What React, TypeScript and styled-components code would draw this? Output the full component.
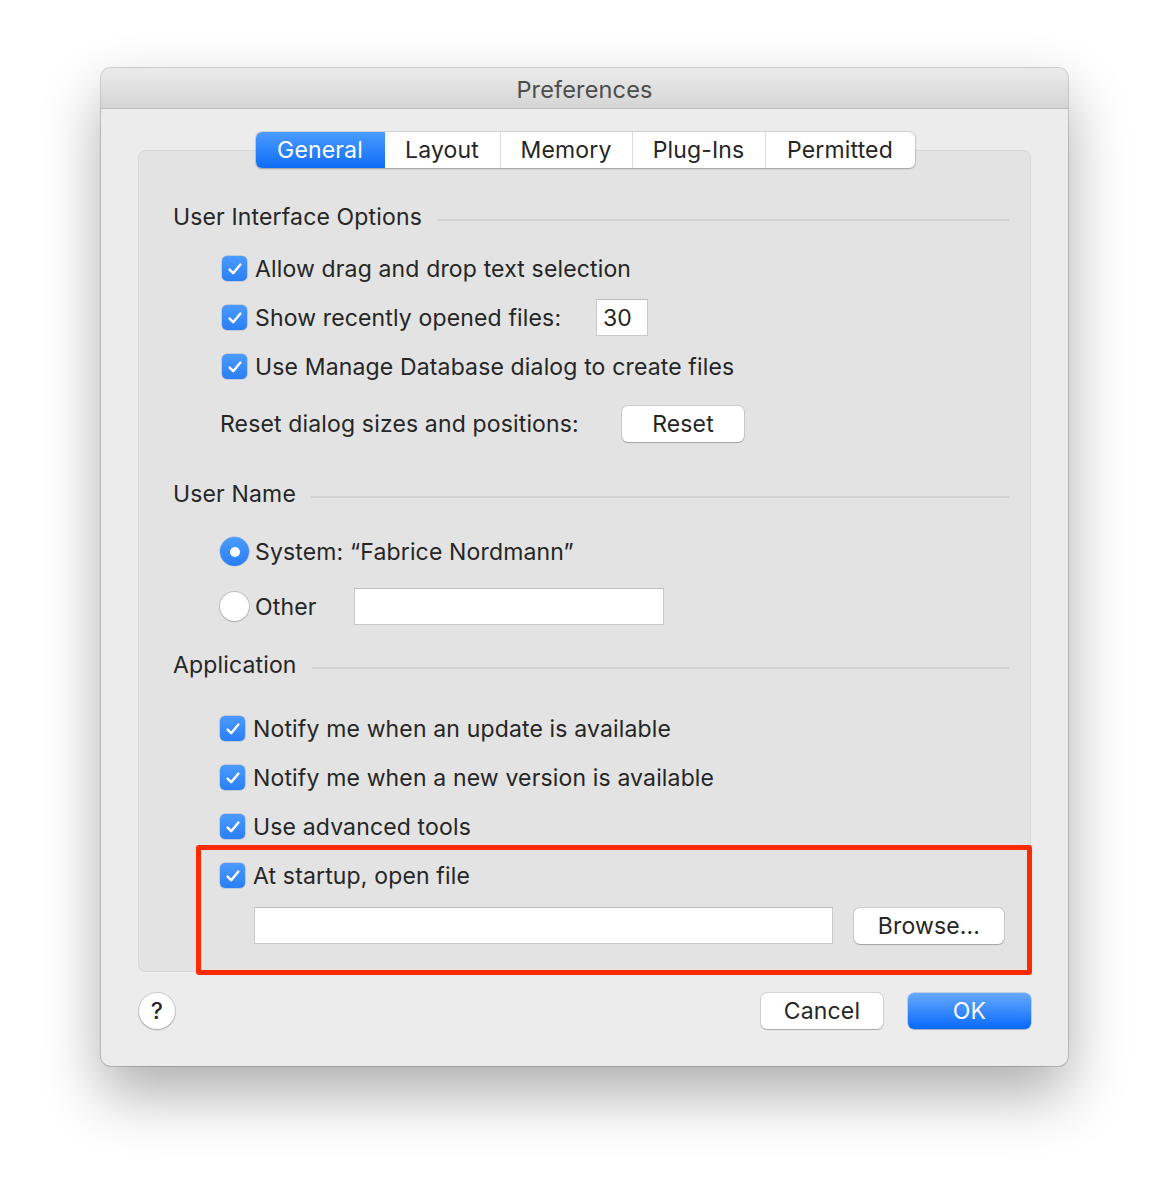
import React from "react";
import styled, { createGlobalStyle } from "styled-components";

const Global = createGlobalStyle`
  html, body { margin: 0; padding: 0; background: #ffffff; }
  body { font-family: Inter, "Noto Sans", "Liberation Sans", sans-serif; color: #262626; letter-spacing: 0.15px; }
  * { box-sizing: border-box; }
`;

const Page = styled.div`
  width: 1170px;
  height: 1201px;
  padding: 68px 0 0 101px;
`;

const Window = styled.div`
  width: 967px;
  height: 998px;
  border-radius: 10px;
  background: #ececec;
  box-shadow: 0 28px 60px rgba(0, 0, 0, 0.32), 0 0 0 1px rgba(0, 0, 0, 0.16);
  overflow: hidden;
  display: flex;
  flex-direction: column;
`;

const TitleBar = styled.div`
  height: 41px;
  flex: none;
  display: flex;
  align-items: center;
  justify-content: center;
  background: linear-gradient(#ebebeb, #d5d5d5);
  border-bottom: 1px solid #bdbdbd;
  font-size: 23.5px;
  color: #4d4d4d;
  padding-top: 2px;
`;

const Body = styled.div`
  flex: 1;
  padding: 23px 37px 0 37px;
  display: flex;
  flex-direction: column;
`;

const TabBar = styled.div`
  align-self: center;
  display: flex;
  height: 36px;
  border-radius: 6px;
  background: #fff;
  box-shadow: 0 0 0 1px rgba(0, 0, 0, 0.1), 0 1px 2px rgba(0, 0, 0, 0.22);
  position: relative;
  z-index: 2;
  margin-left: 1px;
`;

const Tab = styled.div<{ $w: number; $active?: boolean }>`
  width: ${(p) => p.$w}px;
  display: flex;
  align-items: center;
  justify-content: center;
  font-size: 23px;
  color: ${(p) => (p.$active ? "#fff" : "#262626")};
  background: ${(p) => (p.$active ? "linear-gradient(#4c9cff, #0f6cf6)" : "transparent")};
  border-left: ${(p) => (p.$active ? "none" : "1px solid #dcdcdc")};
  &:first-child { border-radius: 6px 0 0 6px; border-left: none; }
  &:last-child { border-radius: 0 6px 6px 0; }
  &:nth-child(2) { border-left: none; }
`;

const GroupBox = styled.div`
  margin-top: -18px;
  background: #e3e3e3;
  border: 1px solid rgba(0, 0, 0, 0.05);
  border-radius: 8px;
  padding: 52px 21px 27px 34px;
  display: flex;
  flex-direction: column;
  position: relative;
`;

const SectionHeader = styled.div<{ $mt?: number }>`
  height: 28px;
  margin-top: ${(p) => p.$mt ?? 0}px;
  display: flex;
  align-items: center;
  font-size: 23px;
  gap: 15px;
  &::after {
    content: "";
    flex: 1;
    height: 2px;
    background: #d2d2d2;
    margin-top: 6px;
  }
`;

const Items = styled.div<{ $mt: number; $indent: number }>`
  margin-top: ${(p) => p.$mt}px;
  padding-left: ${(p) => p.$indent}px;
  display: flex;
  flex-direction: column;
`;

const Row = styled.div<{ $h: number }>`
  height: ${(p) => p.$h}px;
  display: flex;
  align-items: center;
  font-size: 23px;
`;

const Box = styled.span`
  width: 25px;
  height: 25px;
  border-radius: 5px;
  background: linear-gradient(#4b9bff, #2a7ef2);
  display: inline-flex;
  align-items: center;
  justify-content: center;
  margin-right: 8px;
  flex: none;
  box-shadow: 0 0 0 0.5px rgba(0, 60, 160, 0.3);
`;

const Radio = styled.span<{ $on?: boolean }>`
  width: 29px;
  height: 29px;
  border-radius: 50%;
  flex: none;
  margin-right: 6px;
  display: inline-flex;
  align-items: center;
  justify-content: center;
  background: ${(p) => (p.$on ? "linear-gradient(#4b9bff, #2a7ef2)" : "#fff")};
  box-shadow: ${(p) =>
    p.$on ? "0 0 0 0.5px rgba(0,60,160,0.3)" : "0 0 0 1px rgba(0,0,0,0.15), 0 1px 1px rgba(0,0,0,0.12)"};
  &::after {
    content: "";
    display: ${(p) => (p.$on ? "block" : "none")};
    width: 10px;
    height: 10px;
    border-radius: 50%;
    background: #fff;
  }
`;

const Label = styled.span<{ $w?: number }>`
  width: ${(p) => (p.$w ? `${p.$w}px` : "auto")};
  flex: none;
  white-space: nowrap;
`;

const Field = styled.div<{ $w: number; $h?: number }>`
  width: ${(p) => p.$w}px;
  height: ${(p) => p.$h ?? 37}px;
  background: #fff;
  border: 1px solid #c9c9c9;
  border-top-color: #bdbdbd;
  display: flex;
  align-items: center;
  padding-left: 6px;
  font-size: 23px;
  flex: none;
`;

const Button = styled.div<{ $w: number; $primary?: boolean }>`
  width: ${(p) => p.$w}px;
  height: 36px;
  border-radius: 6px;
  display: flex;
  align-items: center;
  justify-content: center;
  font-size: 23px;
  flex: none;
  color: ${(p) => (p.$primary ? "#fff" : "#262626")};
  background: ${(p) => (p.$primary ? "linear-gradient(#66aaff, #0a68fb)" : "#fff")};
  box-shadow: ${(p) =>
    p.$primary
      ? "0 0 0 0.5px rgba(0,70,200,0.35), 0 1px 1px rgba(0,0,0,0.15)"
      : "0 0 0 1px rgba(0,0,0,0.1), 0 1px 1px rgba(0,0,0,0.2)"};
`;

const Highlight = styled.div`
  position: relative;
  display: flex;
  flex-direction: column;
  &::after {
    content: "";
    position: absolute;
    left: -24px;
    top: -6px;
    right: -23px;
    bottom: -31px;
    border: 5px solid #ff2a00;
    border-radius: 3px;
    pointer-events: none;
  }
`;

const FileRow = styled.div`
  display: flex;
  align-items: center;
  margin-top: 7px;
  padding-left: 34px;
  gap: 21px;
`;

const Footer = styled.div`
  display: flex;
  align-items: center;
  margin-top: 20px;
  height: 37px;
  padding-left: 1px;
`;

const Help = styled.div`
  width: 36px;
  height: 36px;
  border-radius: 50%;
  background: #fff;
  box-shadow: 0 0 0 1px rgba(0, 0, 0, 0.12), 0 1px 2px rgba(0, 0, 0, 0.22);
  display: flex;
  align-items: center;
  justify-content: center;
  font-size: 23px;
  font-weight: 500;
`;

const Spacer = styled.div`
  flex: 1;
`;

const Buttons = styled.div`
  display: flex;
  gap: 25px;
`;

const Check = () => (
  <Box>
    <svg width="18" height="18" viewBox="0 0 18 18">
      <path d="M3.6 9.6 L7.2 13.2 L14.4 4.6" fill="none" stroke="#fff" strokeWidth="2.4" strokeLinecap="round" strokeLinejoin="round" />
    </svg>
  </Box>
);

export default function App() {
  return (
    <Page>
      <Global />
      <Window>
        <TitleBar>Preferences</TitleBar>
        <Body>
          <TabBar>
            <Tab $w={129} $active>General</Tab>
            <Tab $w={115}>Layout</Tab>
            <Tab $w={132}>Memory</Tab>
            <Tab $w={133}>Plug-Ins</Tab>
            <Tab $w={150}>Permitted</Tab>
          </TabBar>
          <GroupBox>
            <SectionHeader>User Interface Options</SectionHeader>
            <Items $mt={13} $indent={49}>
              <Row $h={49}><Check /><Label>Allow drag and drop text selection</Label></Row>
              <Row $h={49}>
                <Check />
                <Label $w={341}>Show recently opened files:</Label>
                <Field $w={52}>30</Field>
              </Row>
              <Row $h={49}><Check /><Label>Use Manage Database dialog to create files</Label></Row>
            </Items>
            <Items $mt={0} $indent={47}>
              <Row $h={66}>
                <Label $w={402}>Reset dialog sizes and positions:</Label>
                <Button $w={122}>Reset</Button>
              </Row>
            </Items>
            <SectionHeader $mt={23}>User Name</SectionHeader>
            <Items $mt={16} $indent={47}>
              <Row $h={55}><Radio $on /><Label>System: “Fabrice Nordmann”</Label></Row>
              <Row $h={55}>
                <Radio />
                <Label $w={99}>Other</Label>
                <Field $w={310} />
              </Row>
            </Items>
            <SectionHeader $mt={17}>Application</SectionHeader>
            <Items $mt={25} $indent={47}>
              <Row $h={49}><Check /><Label>Notify me when an update is available</Label></Row>
              <Row $h={49}><Check /><Label>Notify me when a new version is available</Label></Row>
              <Row $h={49}><Check /><Label>Use advanced tools</Label></Row>
              <Highlight>
                <Row $h={49}><Check /><Label>At startup, open file</Label></Row>
                <FileRow>
                  <Field $w={579} />
                  <Button $w={150}>Browse...</Button>
                </FileRow>
              </Highlight>
            </Items>
          </GroupBox>
          <Footer>
            <Help>?</Help>
            <Spacer />
            <Buttons>
              <Button $w={122}>Cancel</Button>
              <Button $w={123} $primary>OK</Button>
            </Buttons>
          </Footer>
        </Body>
      </Window>
    </Page>
  );
}
